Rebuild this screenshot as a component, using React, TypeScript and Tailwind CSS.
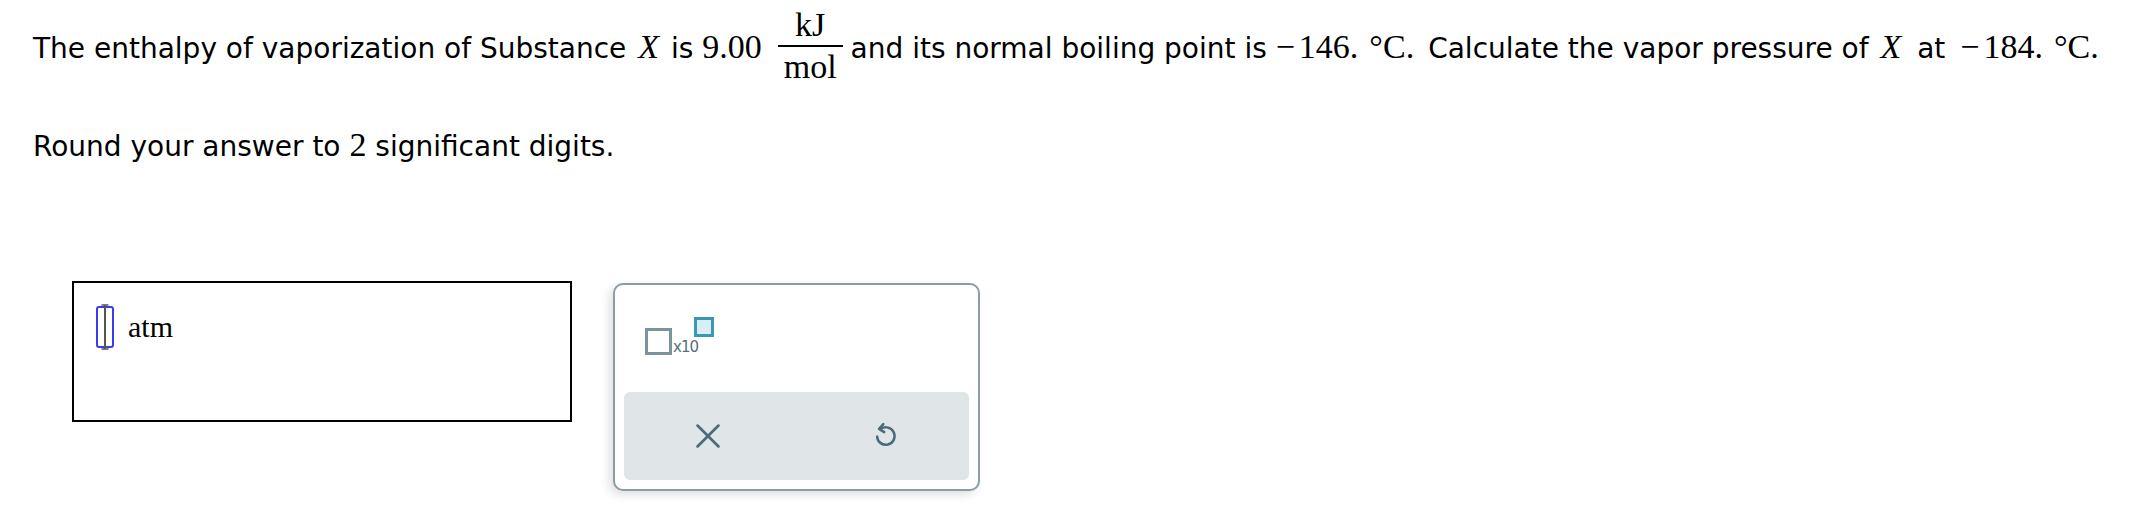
import React from 'react'

const sans = "font-['DejaVu_Sans','Liberation_Sans',sans-serif]"
const serif = "font-['Liberation_Serif','DejaVu_Serif',serif]"

function M({ children, italic }: { children: React.ReactNode; italic?: boolean }) {
  return <span className={`${serif} text-[34px] leading-none ${italic ? 'italic px-[3px]' : ''}`}>{children}</span>
}

// MathJax-ish temperature: minus, number, gap, degree sign
function Temp({ value, wide }: { value: string; wide?: boolean }) {
  return (
    <span className={`${serif} text-[34px] leading-none ${wide ? 'ml-[6px]' : ''}`}>
      <span className="mr-[4px]">−</span>
      {value}
      <span className="ml-[11px]">°C.</span>
    </span>
  )
}

function Fraction({ top, bottom }: { top: string; bottom: string }) {
  return (
    <span className={`${serif} ml-[16px] mr-[8px] inline-flex flex-col items-center align-[22px] text-[34px] leading-[40px]`}>
      <span className="px-[6px]">{top}</span>
      <span className="block h-[2px] w-full bg-black" />
      <span className="px-[6px]">{bottom}</span>
    </span>
  )
}

function CursorIcon() {
  return (
    <svg width="22" height="48" viewBox="0 0 22 48">
      <rect x="2" y="4" width="16" height="40" rx="2" fill="none" stroke="#3b3bf0" strokeWidth="2" />
      <line x1="10" y1="2" x2="10" y2="46" stroke="#555" strokeWidth="2" />
      <line x1="6.5" y1="2" x2="13.5" y2="2" stroke="#555" strokeWidth="1.5" />
      <line x1="6.5" y1="46" x2="13.5" y2="46" stroke="#555" strokeWidth="1.5" />
    </svg>
  )
}

export default function App() {
  return (
    <div className={`${sans} min-h-[518px] w-[2152px] bg-white pl-[33px] text-[28px] text-black`}>
      <div className="pt-[5px] leading-none">
        The enthalpy of vaporization of Substance <M italic>X</M> is <M>9.00</M>
        <Fraction top="kJ" bottom="mol" />
        and its normal boiling point is <Temp value="146." />
        <span className="ml-[14px]">Calculate the vapor pressure of</span> <M italic>X</M> <span className="ml-[4px]">at</span>{' '}
        <Temp value="184." wide />
      </div>

      <p className="mt-[40px] leading-[40px]">
        Round your answer to <M>2</M> significant digits.
      </p>

      <div className="mt-[114px] flex items-start gap-[41px] pl-[39px]">
        <div className="flex h-[141px] w-[500px] items-start border-2 border-black pl-[21px] pt-[20px]">
          <CursorIcon />
          <span className={`${serif} ml-[11px] mt-[6px] text-[30px] leading-[36px]`}>atm</span>
        </div>

        <div className="mt-[2px] flex h-[208px] w-[367px] flex-col justify-between rounded-[10px] border-2 border-[#8a9da6] bg-white p-[9px] shadow-[-4px_4px_10px_rgba(0,0,0,0.12)]">
          <div className="flex items-end pl-[21px] pt-[23px]">
            <span className="block h-[27px] w-[27px] border-[3px] border-[#7b939c]" />
            <span className="ml-[1px] text-[15px] leading-[16px] tracking-[-1px] text-[#56707b]">x10</span>
            <span className="mb-[18px] ml-[-4px] block h-[20px] w-[20px] border-[3px] border-[#3b98b3] bg-[#d6eef4]" />
          </div>
          <div className="flex h-[88px] items-center justify-between rounded-[6px] bg-[#e0e5e8] px-[70px]">
            <svg width="28" height="28" viewBox="0 0 24 24" fill="none" stroke="#4a6c79" strokeWidth="2.2" strokeLinecap="round">
              <line x1="3" y1="3" x2="21" y2="21" />
              <line x1="21" y1="3" x2="3" y2="21" />
            </svg>
            <svg width="30" height="30" viewBox="0 0 24 24" fill="none" stroke="#4a6c79" strokeWidth="2" strokeLinecap="round" strokeLinejoin="round">
              <path d="M6.5 12.5a7 7 0 1 0 3-6.2" />
              <path d="M11.5 2.5l-3.5 3.8 4.2 2.6" />
            </svg>
          </div>
        </div>
      </div>
    </div>
  )
}
